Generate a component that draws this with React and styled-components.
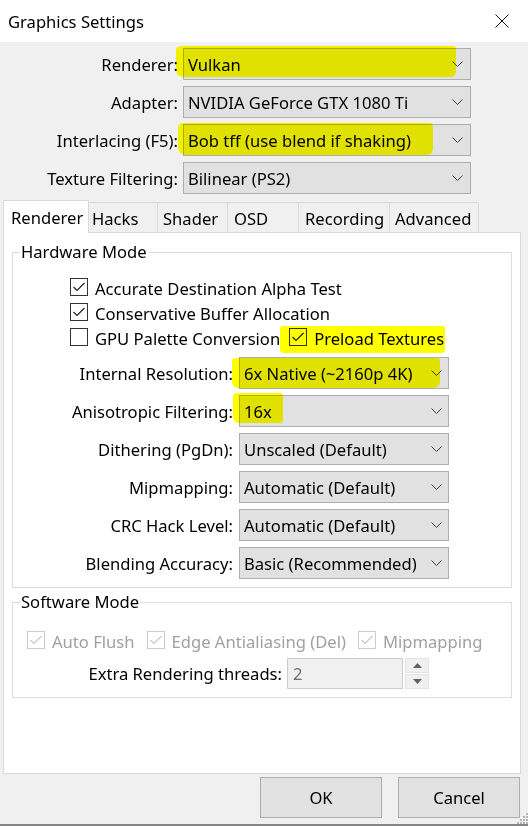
import React from "react";
import styled, { createGlobalStyle } from "styled-components";

const GlobalStyle = createGlobalStyle`
  html, body { margin: 0; padding: 0; }
  body {
    width: 528px;
    height: 826px;
    overflow: hidden;
    background: #f0f0f0;
    font-family: "Noto Sans", "Open Sans", sans-serif;
    font-size: 16.6px;
    color: #000;
  }
  * { box-sizing: border-box; }
`;

const Window = styled.div`
  position: relative;
  width: 528px;
  height: 826px;
  display: flex;
  flex-direction: column;
  background: #f0f0f0;
  border-bottom: 2px solid #858585;
`;

const TitleBar = styled.div`
  flex: none;
  height: 42px;
  background: #fff;
  display: flex;
  align-items: center;
  justify-content: space-between;
  padding: 0 19px 0 8px;
`;

const Title = styled.div`
  font-size: 16.6px;
`;

const CloseIcon = styled.svg`
  display: block;
  width: 14px;
  height: 14px;
`;

const TopForm = styled.div`
  flex: none;
  display: grid;
  grid-template-columns: 178px 288px;
  grid-auto-rows: 32px;
  column-gap: 5px;
  row-gap: 6px;
  padding-top: 6px;
  margin-bottom: 6px;
`;

const Label = styled.div`
  align-self: center;
  text-align: right;
  white-space: nowrap;
  color: ${(p) => (p.$disabled ? "#a0a0a0" : "#000")};
`;

const Select = styled.div`
  height: 32px;
  border: 1px solid #adadad;
  background: #e1e1e1;
  display: flex;
  align-items: center;
  justify-content: space-between;
  padding: 0 ${(p) => p.$arrowPad}px 0 4px;
  white-space: nowrap;
`;

const Chevron = styled.svg`
  display: block;
  width: 11px;
  height: 6px;
  flex: none;
`;

const TabBar = styled.div`
  flex: none;
  position: relative;
  z-index: 1;
  height: 33px;
  margin-bottom: -1px;
  padding-left: 3px;
  display: flex;
  align-items: flex-end;
`;

const Tab = styled.div`
  width: ${(p) => p.$w}px;
  height: ${(p) => (p.$active ? 33 : 31)}px;
  margin-left: ${(p) => (p.$first ? 0 : -1)}px;
  position: relative;
  z-index: ${(p) => (p.$active ? 2 : 1)};
  display: flex;
  align-items: center;
  padding-left: ${(p) => p.$pad}px;
  padding-top: ${(p) => (p.$active ? 0 : 2)}px;
  border: 1px solid #d9d9d9;
  border-bottom: ${(p) => (p.$active ? "none" : "1px solid #d9d9d9")};
  background: ${(p) => (p.$active ? "#fff" : "#f0f0f0")};
  white-space: nowrap;
`;

const Panel = styled.div`
  flex: 1;
  margin: 0 7px 0 3px;
  background: #fff;
  border: 1px solid #d9d9d9;
  padding: 19px 8px 0 8px;
  display: flex;
  flex-direction: column;
`;

const Group = styled.div`
  position: relative;
  border: 1px solid #dcdcdc;
  margin-top: ${(p) => p.$mt}px;
  padding: ${(p) => p.$pt}px 0 ${(p) => p.$pb}px 0;
`;

const GroupTitle = styled.div`
  position: absolute;
  top: -13px;
  left: 7px;
  padding: 0 1px;
  line-height: 24px;
  background: #fff;
`;

const CheckList = styled.div`
  display: flex;
  flex-direction: column;
  padding-left: ${(p) => p.$indent}px;
`;

const CheckRow = styled.div`
  height: 25px;
  display: flex;
  align-items: center;
  gap: ${(p) => p.$gap ?? 12}px;
`;

const CheckItem = styled.div`
  display: flex;
  align-items: center;
  gap: 7px;
  white-space: nowrap;
  color: ${(p) => (p.$disabled ? "#a0a0a0" : "#000")};
`;

const CheckText = styled.span`
  margin-top: 3px;
`;

const Box = styled.div`
  width: 18px;
  height: 18px;
  flex: none;
  border: 1px solid ${(p) => (p.$disabled ? "#cccccc" : "#333333")};
  background: #fff;
  display: flex;
  align-items: center;
  justify-content: center;
`;

const CheckSvg = styled.svg`
  display: block;
  width: 16px;
  height: 16px;
`;

const HwGrid = styled.div`
  display: grid;
  grid-template-columns: 220px 210px;
  grid-auto-rows: 32px;
  column-gap: 6px;
  row-gap: 6px;
  margin-top: 8px;
`;

const SpinRow = styled.div`
  display: flex;
  align-items: center;
  margin-top: 6px;
  height: 31px;
`;

const SpinLabel = styled.div`
  width: 269px;
  margin-right: 5px;
  text-align: right;
  white-space: nowrap;
`;

const SpinField = styled.div`
  width: 116px;
  height: 31px;
  border: 1px solid #cccccc;
  background: #f0f0f0;
  color: #6d6d6d;
  padding-left: 5px;
  display: flex;
  align-items: center;
`;

const SpinButtons = styled.div`
  margin-left: 2px;
  display: flex;
  flex-direction: column;
  gap: 1px;
`;

const SpinButton = styled.div`
  width: 24px;
  height: 15px;
  border: 1px solid #e3e3e3;
  background: #f0f0f0;
  display: flex;
  align-items: center;
  justify-content: center;
`;

const Arrow = styled.svg`
  display: block;
  width: 9px;
  height: 5px;
`;

const Footer = styled.div`
  flex: none;
  height: 50px;
  padding: 3px 8px 0 0;
  display: flex;
  justify-content: flex-end;
  align-items: flex-start;
  gap: 16px;
`;

const Button = styled.div`
  width: 122px;
  height: 41px;
  border: 1px solid #adadad;
  background: #e1e1e1;
  display: flex;
  align-items: center;
  justify-content: center;
`;

const Grip = styled.svg`
  position: absolute;
  right: 0;
  bottom: 0;
  width: 12px;
  height: 12px;
`;

const Marker = styled.div`
  position: absolute;
  left: ${(p) => p.$x}px;
  top: ${(p) => p.$y}px;
  width: ${(p) => p.$w}px;
  height: ${(p) => p.$h}px;
  background: #ffff00;
  mix-blend-mode: multiply;
  border-radius: ${(p) => p.$r || "3px 2px 4px 6px"};
  pointer-events: none;
  z-index: 5;
`;

const ChevronDown = () => (
  <Chevron viewBox="0 0 11 6">
    <polyline points="0.5,0.5 5.5,5.5 10.5,0.5" fill="none" stroke="#404040" strokeWidth="1" />
  </Chevron>
);

const Dropdown = ({ value, arrowPad = 7 }) => (
  <Select $arrowPad={arrowPad}>
    <span>{value}</span>
    <ChevronDown />
  </Select>
);

const Check = ({ checked, disabled, children }) => (
  <CheckItem $disabled={disabled}>
    <Box $disabled={disabled}>
      {checked && (
        <CheckSvg viewBox="0 0 16 16">
          <polyline
            points="2.5,8 6,11.5 13.5,4"
            fill="none"
            stroke={disabled ? "#c8c8c8" : "#222"}
            strokeWidth="1.2"
          />
        </CheckSvg>
      )}
    </Box>
    <CheckText>{children}</CheckText>
  </CheckItem>
);

const topRows = [
  ["Renderer:", "Vulkan"],
  ["Adapter:", "NVIDIA GeForce GTX 1080 Ti"],
  ["Interlacing (F5):", "Bob tff (use blend if shaking)"],
  ["Texture Filtering:", "Bilinear (PS2)"],
];

const hwRows = [
  ["Internal Resolution:", "6x Native (~2160p 4K)"],
  ["Anisotropic Filtering:", "16x"],
  ["Dithering (PgDn):", "Unscaled (Default)"],
  ["Mipmapping:", "Automatic (Default)"],
  ["CRC Hack Level:", "Automatic (Default)"],
  ["Blending Accuracy:", "Basic (Recommended)"],
];

const tabs = [
  { name: "Renderer", w: 86, pad: 7 },
  { name: "Hacks", w: 70, pad: 3 },
  { name: "Shader", w: 71, pad: 5 },
  { name: "OSD", w: 72, pad: 6 },
  { name: "Recording", w: 92, pad: 6 },
  { name: "Advanced", w: 90, pad: 5 },
];

export default function App() {
  return (
    <>
      <GlobalStyle />
      <Window>
        <TitleBar>
          <Title>Graphics Settings</Title>
          <CloseIcon viewBox="0 0 14 14">
            <line x1="0.5" y1="0.5" x2="13.5" y2="13.5" stroke="#111" strokeWidth="1" />
            <line x1="13.5" y1="0.5" x2="0.5" y2="13.5" stroke="#111" strokeWidth="1" />
          </CloseIcon>
        </TitleBar>

        <TopForm>
          {topRows.map(([l, v]) => (
            <React.Fragment key={l}>
              <Label>{l}</Label>
              <Dropdown value={v} arrowPad={7} />
            </React.Fragment>
          ))}
        </TopForm>

        <TabBar>
          {tabs.map((t, i) => (
            <Tab key={t.name} $w={t.w} $pad={t.pad} $active={i === 0} $first={i === 0}>
              {t.name}
            </Tab>
          ))}
        </TabBar>

        <Panel>
          <Group $mt={0} $pt={21} $pb={8}>
            <GroupTitle>Hardware Mode</GroupTitle>
            <CheckList $indent={57}>
              <CheckRow>
                <Check checked>Accurate Destination Alpha Test</Check>
              </CheckRow>
              <CheckRow>
                <Check checked>Conservative Buffer Allocation</Check>
              </CheckRow>
              <CheckRow $gap={9}>
                <Check>GPU Palette Conversion</Check>
                <Check checked>Preload Textures</Check>
              </CheckRow>
            </CheckList>
            <HwGrid>
              {hwRows.map(([l, v]) => (
                <React.Fragment key={l}>
                  <Label>{l}</Label>
                  <Dropdown value={v} arrowPad={6} />
                </React.Fragment>
              ))}
            </HwGrid>
          </Group>

          <Group $mt={14} $pt={24} $pb={8}>
            <GroupTitle>Software Mode</GroupTitle>
            <CheckList $indent={14}>
              <CheckRow>
                <Check checked disabled>Auto Flush</Check>
                <Check checked disabled>Edge Antialiasing (Del)</Check>
                <Check checked disabled>Mipmapping</Check>
              </CheckRow>
            </CheckList>
            <SpinRow>
              <SpinLabel>Extra Rendering threads:</SpinLabel>
              <SpinField>2</SpinField>
              <SpinButtons>
                <SpinButton>
                  <Arrow viewBox="0 0 9 5">
                    <polygon points="0,5 4.5,0 9,5" fill="#606060" />
                  </Arrow>
                </SpinButton>
                <SpinButton>
                  <Arrow viewBox="0 0 9 5">
                    <polygon points="0,0 4.5,5 9,0" fill="#606060" />
                  </Arrow>
                </SpinButton>
              </SpinButtons>
            </SpinRow>
          </Group>
        </Panel>

        <Footer>
          <Button>OK</Button>
          <Button>Cancel</Button>
        </Footer>

        <Grip viewBox="0 0 12 12">
          {[
            [9, 0], [9, 3], [6, 3], [9, 6], [6, 6], [3, 6], [9, 9], [6, 9], [3, 9], [0, 9],
          ].map(([x, y]) => (
            <rect key={`${x}-${y}`} x={x + 1} y={y + 1} width="2" height="2" fill="#b5b5b5" />
          ))}
        </Grip>

        <Marker $x={176} $y={46} $w={280} $h={31} $r="6px 3px 5px 8px / 4px 3px 6px 6px" />
        <Marker $x={178} $y={123} $w={255} $h={32} $r="5px 4px 6px 8px" />
        <Marker $x={280} $y={326} $w={165} $h={27} $r="3px 2px 4px 4px" />
        <Marker $x={232} $y={358} $w={208} $h={30} $r="4px 3px 6px 6px" />
        <Marker $x={233} $y={393} $w={50} $h={30} $r="4px 3px 3px 6px" />
      </Window>
    </>
  );
}
